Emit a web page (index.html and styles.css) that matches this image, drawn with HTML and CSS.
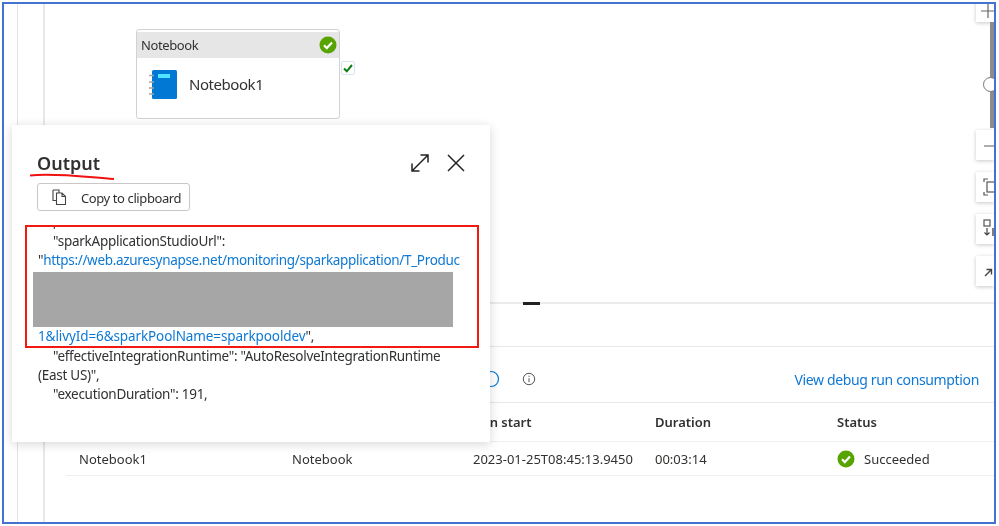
FILE: index.html
```html
<!DOCTYPE html>
<html lang="en">
<head>
<meta charset="utf-8">
<title>Notebook output</title>
<link rel="stylesheet" href="styles.css">
</head>
<body>
<div class="frame">
  <div class="rail"></div>
  <div class="rail-wide"></div>
  <main class="main">
    <section class="canvas">
      <div class="node">
        <div class="node-head">
          <span>Notebook</span>
          <svg class="status-icon" viewBox="0 0 18 18"><circle cx="9" cy="9" r="8.5" fill="#57a300"/><path d="M5 9.3l2.8 2.8L13 6.6" fill="none" stroke="#fff" stroke-width="2.2"/></svg>
        </div>
        <div class="node-body">
          <svg class="nb-icon" viewBox="0 0 28 29">
            <rect x="3" y="0" width="25" height="29" rx="1.5" fill="#0078d4"/>
            <rect x="9" y="4" width="12" height="4" fill="#50e6ff"/>
            <path d="M0 5.5h5M0 12h5M0 18h5M0 24h5" stroke="#a5a5a5" stroke-width="1.6"/>
          </svg>
          <span>Notebook1</span>
        </div>
      </div>
      <div class="node-check">
        <svg viewBox="0 0 12 12"><path d="M2 6.5l2.8 2.8L10 3" fill="none" stroke="#107c10" stroke-width="2"/></svg>
      </div>
      <div class="zoom-tools">
        <div class="tool tool-plus"><svg viewBox="0 0 18 22"><path d="M5 11h13M12 0v18" stroke="#666" stroke-width="1.2" fill="none"/></svg></div>
        <div class="track"><span class="knob"></span></div>
        <div class="tool tool-minus"><svg viewBox="0 0 18 30"><path d="M8 16h10" stroke="#777" stroke-width="1.2"/></svg></div>
        <div class="tool"><svg viewBox="0 0 18 30"><path d="M12 7H8v3M8 20v3h4" stroke="#555" stroke-width="1.2" fill="none"/><rect x="11" y="10" width="9" height="10" stroke="#555" stroke-width="1.2" fill="none"/></svg></div>
        <div class="tool"><svg viewBox="0 0 18 30"><rect x="8" y="6" width="6" height="6" stroke="#555" stroke-width="1.2" fill="none"/><path d="M11 14v7M8.5 18.5l2.5 2.5 2.5-2.5" stroke="#444" stroke-width="1.2" fill="none"/><path d="M17 14v8" stroke="#555" stroke-width="1.5"/></svg></div>
        <div class="tool"><svg viewBox="0 0 18 30"><path d="M9 20l6-6M10.5 13.5H15.5V18.5" stroke="#444" stroke-width="1.4" fill="none"/></svg></div>
      </div>
    </section>
    <div class="tabbar"><span class="tab-mark"></span></div>
    <div class="actions">
      <svg class="ring" viewBox="0 0 18 18"><circle cx="9" cy="9" r="7.5" fill="none" stroke="#0078d4" stroke-width="1.2"/></svg>
      <svg class="info" viewBox="0 0 14 14"><circle cx="7" cy="7" r="5.7" fill="none" stroke="#555" stroke-width="1"/><path d="M7 6.2v4M7 3.7v1.2" stroke="#555" stroke-width="1"/></svg>
      <a class="link consumption">View debug run consumption</a>
    </div>
    <div class="runs">
      <div class="runs-row runs-head">
        <span>Activity name</span><span>Activity type</span><span>Run start</span><span>Duration</span><span>Status</span>
      </div>
      <div class="runs-row runs-item">
        <span>Notebook1</span><span>Notebook</span><span>2023-01-25T08:45:13.9450</span><span>00:03:14</span>
        <span class="status">
          <svg class="status-icon" viewBox="0 0 18 18"><circle cx="9" cy="9" r="8.5" fill="#57a300"/><path d="M5 9.3l2.8 2.8L13 6.6" fill="none" stroke="#fff" stroke-width="2.2"/></svg>
          Succeeded
        </span>
      </div>
    </div>
  </main>

  <aside class="popup">
    <header class="popup-head">
      <h2>Output</h2>
      <div class="popup-icons">
        <svg class="expand" viewBox="0 0 20 20"><path d="M2 18L18 2M10.5 2H18V9.5M2 10.5V18H9.5" fill="none" stroke="#222" stroke-width="1.5"/></svg>
        <svg class="close" viewBox="0 0 18 18"><path d="M1 1l16 16M17 1L1 17" fill="none" stroke="#222" stroke-width="1.5"/></svg>
      </div>
    </header>
    <button class="copy">
      <svg viewBox="0 0 15 16"><path d="M1 1h6v2.500M1 1v10.500h3M4.500 4h5.500l3.500 3.500v8h-9zM10 4v3.500h3.500" fill="none" stroke="#444" stroke-width="1.1"/></svg>
      <span class="copy-label">Copy to clipboard</span>
    </button>
    <div class="code">
      <div class="line line-clipped indent">,</div>
      <div class="line indent">"sparkApplicationStudioUrl":</div>
      <div class="line">"<a class="link link-long">https://web.azuresynapse.net/monitoring/sparkapplication/T_Produc</a></div>
      <div class="redacted"></div>
      <div class="line"><a class="link link-end">1&amp;livyId=6&amp;sparkPoolName=sparkpooldev</a>",</div>
      <div class="line line-gap indent">"effectiveIntegrationRuntime": "AutoResolveIntegrationRuntime</div>
      <div class="line">(East US)",</div>
      <div class="line indent">"executionDuration": 191,</div>
    </div>
    <div class="red-box"></div>
    <svg class="red-line" viewBox="0 0 84 8"><path d="M0 2.5C25 0 55 4 84 6" fill="none" stroke="#f01010" stroke-width="2"/></svg>
  </aside>
</div>
</body>
</html>
```

FILE: styles.css
```css
* { box-sizing: border-box; }
html, body { margin: 0; height: 100%; background: #fff; overflow: hidden; }
body { font-family: "Noto Sans", "Open Sans", sans-serif; color: #323130; }
.frame {
  position: relative;
  display: flex;
  width: 994px;
  height: 522px;
  margin: 2px;
  border: 2px solid #4472cf;
  overflow: hidden;
  background: #fff;
  filter: blur(0.35px);
}
.rail { width: 14px; border-right: 1px solid #e4e4e4; flex: none; }
.rail-wide { width: 27px; border-right: 2px solid #e8e8e8; flex: none; }
.main { flex: 1; min-width: 0; display: flex; flex-direction: column; }
.canvas { position: relative; height: 298px; flex: none; }
.node {
  position: absolute;
  left: 91px;
  top: 25px;
  width: 204px;
  height: 90px;
  border: 1px solid #d2d2d2;
  border-radius: 3px;
  padding-top: 2px;
  background: #fff;
}
.node-head {
  display: flex;
  align-items: center;
  justify-content: space-between;
  height: 26px;
  padding: 0 2px 0 4px;
  background: #e6e6e6;
  font-size: 13px;
  letter-spacing: -0.4px;
}
.status-icon { width: 18px; height: 18px; flex: none; }
.node-body { display: flex; align-items: center; gap: 12px; padding: 11px 0 0 12px; font-size: 15px; letter-spacing: -0.45px; }
.nb-icon { width: 28px; height: 29px; flex: none; margin-top: 1px; }
.node-check {
  position: absolute;
  left: 296px;
  top: 57px;
  width: 14px;
  height: 14px;
  border: 1px solid #d3e5f7;
  border-radius: 2px;
  display: flex;
}
.node-check svg { width: 12px; height: 12px; }
.zoom-tools { position: absolute; right: 0; top: -4px; width: 18px; }
.tool {
  height: 30px;
  margin-bottom: 12px;
  background: #fff;
  box-shadow: 0 1px 4px rgba(0,0,0,.22);
}
.tool svg { display: block; width: 18px; height: 30px; }
.tool-plus { height: 22px; margin-bottom: 0; }
.tool-plus svg { height: 22px; }
.tool-minus { margin-top: 2px; }
.track { position: relative; height: 106px; margin-left: 14px; width: 4px; background: #8c8c8c; }
.knob {
  position: absolute;
  left: -7px;
  top: 55px;
  width: 15px;
  height: 15px;
  border: 1.5px solid #777;
  border-radius: 50%;
  background: #fff;
}
.tabbar { position: relative; height: 44px; flex: none; border-top: 2px solid #ebebeb; }
.tab-mark { position: absolute; left: 478px; top: -2px; width: 17px; height: 3px; background: #222; }
.actions {
  display: flex;
  align-items: center;
  height: 57px;
  flex: none;
  padding: 9px 15px 0 437px;
  border-top: 1px solid #e8e8e8;
  border-bottom: 1px solid #e8e8e8;
}
.ring { width: 18px; height: 18px; margin-right: 22px; flex: none; }
.info { width: 14px; height: 14px; flex: none; }
.link { color: #0f78d4; }
.consumption { margin-left: auto; font-size: 14px; letter-spacing: -0.35px; }
.runs { margin-left: 21px; font-size: 13px; }
.runs-row { display: grid; grid-template-columns: 213px 181px 182px 182px 1fr; padding-left: 13px; align-items: center; }
.runs-head { height: 39px; font-weight: 600; border-bottom: 1px solid #efefef; }
.runs-item { height: 34px; border-bottom: 1px solid #efefef; }
.status { display: flex; align-items: center; gap: 9px; }
.popup {
  position: absolute;
  left: 8px;
  top: 121px;
  width: 478px;
  height: 317px;
  padding: 20px 25px 0 25px;
  background: #fff;
  box-shadow: 0 2px 10px rgba(0,0,0,.16);
}
.popup-head { display: flex; align-items: center; justify-content: space-between; height: 36px; }
.popup-head h2 { margin: 0; font-size: 18px; font-weight: 600; line-height: 36px; }
.popup-icons { display: flex; align-items: center; gap: 17px; }
.expand { width: 20px; height: 20px; }
.close { width: 18px; height: 18px; }
.copy {
  display: flex;
  align-items: center;
  gap: 14px;
  width: 153px;
  height: 28px;
  margin: 2px 0 0;
  padding: 0 0 0 14px;
  border: 1px solid #c8c8c8;
  border-radius: 3px;
  background: #fff;
  color: #323130;
  font: 13px "Noto Sans", "Open Sans", sans-serif;
}
.copy svg { width: 15px; height: 16px; flex: none; }
.copy-label { letter-spacing: -0.4px; padding-top: 1px; }
.code {
  margin: 16px 0 0 -4px;
  padding-left: 5px;
  font-size: 13.5px;
  line-height: 19px;
  letter-spacing: -0.28px;
  height: 178px;
  overflow: hidden;
  white-space: nowrap;
}
.line { height: 19px; }
.line-clipped { margin-top: -14px; }
.line-gap { margin-top: 1px; }
.link-long { letter-spacing: -0.33px; }
.link-end { letter-spacing: -0.1px; }
.indent { padding-left: 15px; }
.redacted { width: 420px; height: 55px; margin: 2px 0 0 -5px; background: #a6a6a6; }
.red-box { position: absolute; left: 13px; top: 100px; width: 454px; height: 123px; border: 2px solid #f01a10; }
.red-line { position: absolute; left: 18px; top: 48px; width: 84px; height: 8px; }
```
